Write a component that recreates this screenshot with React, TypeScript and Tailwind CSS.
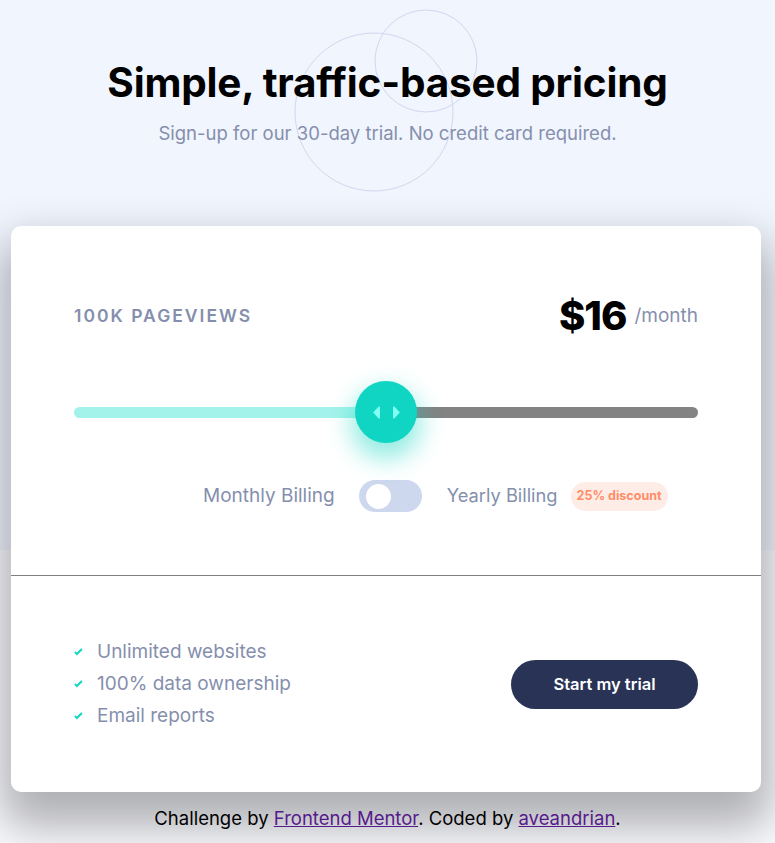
import { useState } from 'react'

const features = ['Unlimited websites', '100% data ownership', 'Email reports']

function CheckIcon() {
  return (
    <svg width="9" height="8" viewBox="0 0 9 8" fill="none">
      <path d="M1 4.134l1.907 1.908L7.949 1" stroke="#10D8C4" strokeWidth="2" />
    </svg>
  )
}

function SliderArrows() {
  return (
    <svg width="27" height="13" viewBox="0 0 27 13" fill="#80FFF3">
      <path d="M7 1.2v10.6a.8.8 0 01-1.35.58L.6 7.1a.8.8 0 010-1.2L5.65.62A.8.8 0 017 1.2z" />
      <path d="M20 1.2v10.6a.8.8 0 001.35.58L26.4 7.1a.8.8 0 000-1.2L21.35.62A.8.8 0 0020 1.2z" />
    </svg>
  )
}

export default function App() {
  const [yearly, setYearly] = useState(false)

  return (
    <div className="min-h-screen bg-[linear-gradient(#f1f5fe_0,#f1f5fe_550px,#fafbff_550px)] font-['Inter',sans-serif] pb-4">
      {/* Header */}
      <header className="relative pt-[59px] text-center">
        <svg
          className="absolute left-[290px] top-[5px]"
          width="195"
          height="195"
          viewBox="0 0 195 195"
          fill="none"
        >
          <circle cx="84" cy="107" r="79" stroke="#cfd8ef" strokeWidth="1" />
          <circle cx="136" cy="56" r="51" stroke="#cfd8ef" strokeWidth="1" />
        </svg>
        <h1 className="relative text-[40.5px] leading-[48px] font-bold text-black tracking-[-0.2px]">
          Simple, traffic-based pricing
        </h1>
        <p className="relative mt-3 text-[18.5px] leading-7 text-[#858fad]">
          Sign-up for our 30-day trial. No credit card required.
        </p>
      </header>

      {/* Card */}
      <main className="ml-[11px] mt-[79px] w-[750px] bg-white rounded-[10px] shadow-[0_25px_45px_10px_rgba(0,0,0,0.3)]">
        <section className="px-[63px] pt-[70px] pb-[63px]">
          <div className="flex items-center justify-between h-10">
            <span className="text-[17.5px] font-semibold tracking-[2px] text-[#858fad]">
              100K PAGEVIEWS
            </span>
            <div className="flex items-center gap-2">
              <span className="text-[40px] font-extrabold text-black tracking-[-1px]">$16</span>
              <span className="text-[19px] text-[#858fad]">/month</span>
            </div>
          </div>

          {/* Slider */}
          <div className="relative mt-[45px] h-[62px] flex items-center">
            <div className="flex w-full h-[11px] rounded-full overflow-hidden">
              <div className="w-1/2 bg-[#a4f3eb]" />
              <div className="flex-1 bg-[#838383]" />
            </div>
            <button className="absolute left-[281px] top-0 w-[62px] h-[62px] rounded-full bg-[#10d5c2] flex items-center justify-center shadow-[0_12px_24px_4px_rgba(16,213,194,0.45)]">
              <SliderArrows />
            </button>
          </div>

          {/* Billing toggle */}
          <div className="mt-[37px] flex items-center pl-[129px] h-8 text-[19px] text-[#858fad]">
            <span>Monthly Billing</span>
            <button
              onClick={() => setYearly(!yearly)}
              className={`ml-[24px] w-[63px] h-8 rounded-full bg-[#cdd7ee] flex items-center px-[7px] ${yearly ? 'justify-end' : 'justify-start'}`}
            >
              <span className="w-[25px] h-[25px] rounded-full bg-white" />
            </button>
            <span className="ml-[25px] text-[18.3px]">Yearly Billing</span>
            <span className="ml-[13px] px-[6px] h-[29px] flex items-center rounded-full bg-[#feece7] text-[#ff8d68] text-[12.5px] font-bold">
              25% discount
            </span>
          </div>
        </section>

        <div className="h-px bg-[#808080]" />

        <section className="px-[63px] py-[60px] flex items-center justify-between">
          <ul>
            {features.map((f) => (
              <li key={f} className="flex items-center gap-[14px] h-8 text-[19px] text-[#858fad]">
                <CheckIcon />
                <span>{f}</span>
              </li>
            ))}
          </ul>
          <button className="w-[187px] h-[49px] rounded-full bg-[#293356] text-white text-[16.5px] font-semibold">
            Start my trial
          </button>
        </section>
      </main>

      <footer className="mt-[14px] text-center text-[18.5px] leading-6 text-black">
        Challenge by{' '}
        <a href="#" className="underline text-[#551a8b]">Frontend Mentor</a>. Coded by{' '}
        <a href="#" className="underline text-[#551a8b]">aveandrian</a>.
      </footer>
    </div>
  )
}
